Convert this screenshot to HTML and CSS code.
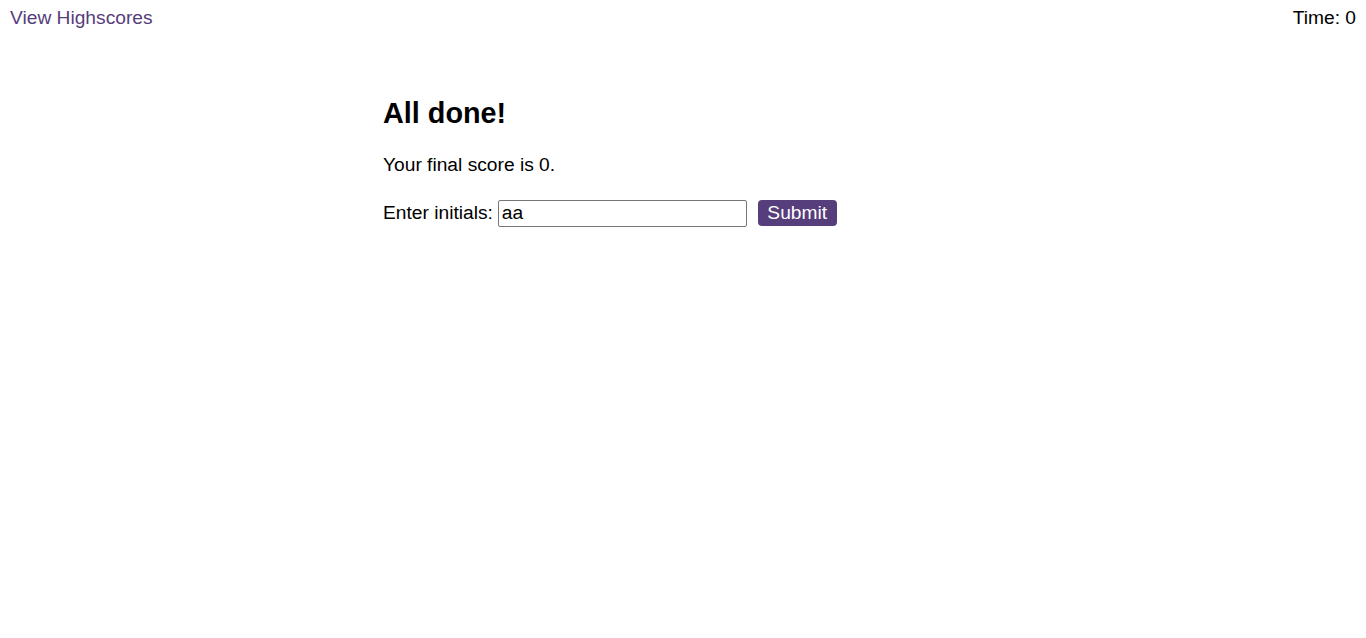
FILE: index.html
```html
<!DOCTYPE html>
<html lang="en">
<head>
<meta charset="utf-8">
<title>Code Quiz</title>
<link rel="stylesheet" href="styles.css">
</head>
<body>
<header class="top-bar">
  <a class="highscores-link" href="#">View Highscores</a>
  <div class="timer">Time: <span>0</span></div>
</header>
<main class="quiz">
  <section class="done">
    <h1 class="done-title">All done!</h1>
    <p class="final-score">Your final score is 0.</p>
    <form class="initials-form">
      <label class="initials-label" for="initials">Enter initials:</label>
      <input class="initials-input" id="initials" type="text" value="aa">
      <button class="submit-btn" type="submit">Submit</button>
    </form>
  </section>
</main>
</body>
</html>
```

FILE: styles.css
```css
* { box-sizing: border-box; }

body {
  margin: 0;
  font-family: "Liberation Sans", Arial, sans-serif;
  font-size: 19.2px;
  color: #000;
  background: #fff;
}

.top-bar {
  display: flex;
  justify-content: space-between;
  align-items: flex-start;
  padding: 7px 10px 0 10px;
  line-height: 22px;
}

.highscores-link {
  color: #563d7c;
  text-decoration: none;
}

.timer {
  color: #000;
}

.quiz {
  width: 600px;
  margin: 0 auto;
  padding-top: 68px;
}

.done-title {
  margin: 0;
  font-size: 28.8px;
  font-weight: bold;
  line-height: 33px;
}

.final-score {
  margin: 24px 0 0 0;
  line-height: 22px;
}

.initials-form {
  display: flex;
  align-items: flex-start;
  margin-top: 24px;
}

.initials-label {
  margin-right: 5px;
  line-height: 25px;
  padding-bottom: 2px;
}

.initials-input {
  width: 249px;
  height: 27px;
  font-family: "Liberation Sans", Arial, sans-serif;
  font-size: 19.2px;
  padding: 0 3px 2px 3px;
  border: 1px solid #767676;
  border-radius: 2px;
  margin: 0 11px 0 0;
  color: #000;
}

.submit-btn {
  background: #563d7c;
  color: #fff;
  border: none;
  border-radius: 4px;
  font-family: "Liberation Sans", Arial, sans-serif;
  font-size: 19.2px;
  height: 26px;
  padding: 0 9.5px 1px 9.5px;
  line-height: 25px;
  cursor: pointer;
}
```
